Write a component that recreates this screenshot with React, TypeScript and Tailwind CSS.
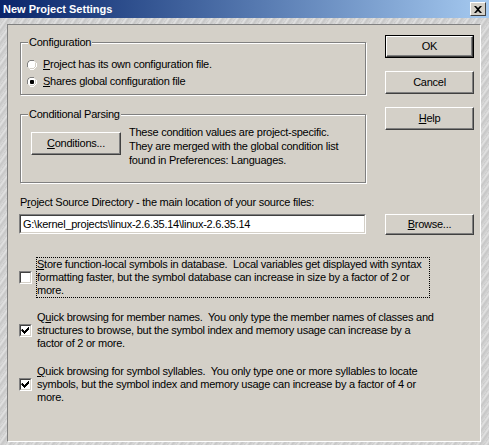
import type { ReactNode } from 'react';

function Radio({ checked }: { checked?: boolean }) {
    return (
        <svg width="12" height="12" viewBox="0 0 12 12" className="shrink-0">
            <path d="M1 8V4L2 3V2H3L4 1H8V2H4L3 3H2V4V8H1Z" fill="#808080" />
            <path d="M2 8V4L3 3H4V2H8V3H4L3 4V8H2Z" fill="#404040" />
            <path d="M2 4L4 2H8L10 4V8L8 10H4L2 8Z" fill="#ffffff" />
            <path d="M10 4H11V8H10V9H9V10H8V11H4V10H8V9H9V8H10Z" fill="#ffffff" />
            <path d="M9 4H10V8H9V9H8V10H4V9H8V8H9Z" fill="#d4d0c8" />
            {checked && <rect x="4" y="4" width="4" height="4" rx="1" fill="#000" />}
        </svg>
    );
}

function Check({ checked }: { checked?: boolean }) {
    return (
        <span className="w-[13px] h-[13px] shrink-0 border-t border-l border-t-[#808080] border-l-[#808080] border-b border-r border-b-white border-r-white">
            <span className="block w-full h-full bg-white border-t border-l border-t-[#404040] border-l-[#404040] border-b border-r border-b-[#d4d0c8] border-r-[#d4d0c8]">
                {checked && (
                    <svg width="9" height="9" viewBox="0 0 9 9" className="block">
                        <path d="M1 3h1v1h1v1h1v-1h1v-1h1v-1h1v-1h1v3h-1v1h-1v1h-1v1h-1v1h-1v-1h-1v-1h-1v-1h-1z" fill="#000" />
                    </svg>
                )}
            </span>
        </span>
    );
}

function Btn({ children, className, isDefault }: { children: ReactNode; className: string; isDefault?: boolean }) {
    const inner = (
        <div className="w-full h-full flex items-center justify-center border-t border-l border-t-white border-l-white border-b border-r border-b-[#404040] border-r-[#404040] shadow-[inset_-1px_-1px_0_#808080]">
            {children}
        </div>
    );
    return isDefault ? (
        <div className={`${className} border border-black`}>{inner}</div>
    ) : (
        <div className={className}>{inner}</div>
    );
}

function Group({ title, className, children }: { title: string; className: string; children: ReactNode }) {
    return (
        <div className={`relative border border-[#808080] shadow-[1px_1px_0_#ffffff,inset_1px_1px_0_#ffffff] ${className}`}>
            <span className="absolute -top-[7px] left-[7px] px-[1px] bg-[#d4d0c8] leading-[13px]">{title}</span>
            {children}
        </div>
    );
}

function Option({ checked, focused, className, children }: { checked?: boolean; focused?: boolean; className: string; children: ReactNode }) {
    return (
        <div className={`flex items-center ${className}`}>
            <Check checked={checked} />
            <div className={`ml-[4px] w-[394px] h-[41px] leading-[13px] whitespace-nowrap border ${focused ? 'border-dotted border-black' : 'border-transparent'}`}>
                {children}
            </div>
        </div>
    );
}

export default function App() {
    return (
        <div className="w-[489px] h-[445px] flex flex-col text-[11px] text-black font-['Liberation_Sans',Arial,sans-serif] bg-[repeating-linear-gradient(125deg,#cacaca_0px,#e2e2e2_2px,#c6c6c6_4px,#d8d8d8_7px)]">
            {/* title bar */}
            <div className="h-[18px] shrink-0 flex items-center pl-[3px] pr-[3px] bg-gradient-to-r from-[#0a246a] to-[#a6caf0]">
                <span className="text-white font-bold text-[11px] leading-none">New Project Settings</span>
                <div className="ml-auto w-[16px] h-[14px] bg-[#d4d0c8] border-t border-l border-t-white border-l-white border-b border-r border-b-[#404040] border-r-[#404040] flex items-center justify-center">
                    <svg width="8" height="7" viewBox="0 0 8 7">
                        <path d="M0 0h2l2 2 2-2h2L5 3.5 8 7H6L4 5 2 7H0l3-3.5z" fill="#000" />
                    </svg>
                </div>
            </div>

            {/* dialog body */}
            <div className="flex-1 pt-[6px] pl-[7px] pr-[8px] pb-[3px] flex">
                <div className="flex-1 bg-[#d4d0c8] border-t border-l border-t-[#808080] border-l-[#808080] border-b border-r border-b-white border-r-white pl-[11px] tracking-[-0.25px]">
                    <div className="flex items-start">
                        <div className="ml-[1px] w-[346px]">
                            <Group title="Configuration" className="mt-[17px] h-[53px] pl-[5px] pt-[13px]">
                                <div className="flex items-center h-[17px]">
                                    <Radio />
                                    <span className="ml-[5px]"><u>P</u>roject has its own configuration file.</span>
                                </div>
                                <div className="flex items-center h-[17px]">
                                    <Radio checked />
                                    <span className="ml-[5px]"><u>S</u>hares global configuration file</span>
                                </div>
                            </Group>
                            <Group title="Conditional Parsing" className="mt-[19px] h-[69px] flex items-start pl-[10px]">
                                <Btn className="mt-[17px] w-[90px] h-[23px] shrink-0">
                                    <span><u>C</u>onditions...</span>
                                </Btn>
                                <div className="ml-[8px] mt-[10px] leading-[14px] whitespace-nowrap">
                                    These condition values are project-specific.<br />
                                    They are merged with the global condition list<br />
                                    found in Preferences: Languages.
                                </div>
                            </Group>
                        </div>
                        <div className="ml-[19px] mt-[10px] flex flex-col gap-[13px]">
                            <Btn isDefault className="w-[89px] h-[23px]">OK</Btn>
                            <Btn className="w-[89px] h-[23px]">Cancel</Btn>
                            <Btn className="w-[89px] h-[23px]"><span><u>H</u>elp</span></Btn>
                        </div>
                    </div>

                    <div className="mt-[13px] ml-[1px] leading-[13px]">
                        P<u>r</u>oject Source Directory - the main location of your source files:
                    </div>
                    <div className="mt-[5px] flex items-start">
                        <div className="w-[347px] h-[20px] border-t border-l border-t-[#808080] border-l-[#808080] border-b border-r border-b-white border-r-white">
                            <div className="w-full h-full bg-white border-t border-l border-t-[#404040] border-l-[#404040] border-b border-r border-b-[#d4d0c8] border-r-[#d4d0c8] pl-[2px] leading-[16px] whitespace-nowrap">
                                G:\kernel_projects\linux-2.6.35.14\linux-2.6.35.14
                            </div>
                        </div>
                        <Btn className="ml-[19px] w-[89px] h-[21px]"><span><u>B</u>rowse...</span></Btn>
                    </div>

                    <Option focused className="mt-[22px]">
                        <u>S</u>tore function-local symbols in database.&nbsp; Local variables get displayed with syntax<br />
                        formatting faster, but the symbol database can increase in size by a factor of 2 or<br />
                        more.
                    </Option>
                    <Option checked className="mt-[12px]">
                        Q<u>u</u>ick browsing for member names.&nbsp; You only type the member names of classes and<br />
                        structures to browse, but the symbol index and memory usage can increase by a<br />
                        factor of 2 or more.
                    </Option>
                    <Option checked className="mt-[13px]">
                        <u>Q</u>uick browsing for symbol syllables.&nbsp; You only type one or more syllables to locate<br />
                        symbols, but the symbol index and memory usage can increase by a factor of 4 or<br />
                        more.
                    </Option>
                </div>
            </div>
        </div>
    );
}
